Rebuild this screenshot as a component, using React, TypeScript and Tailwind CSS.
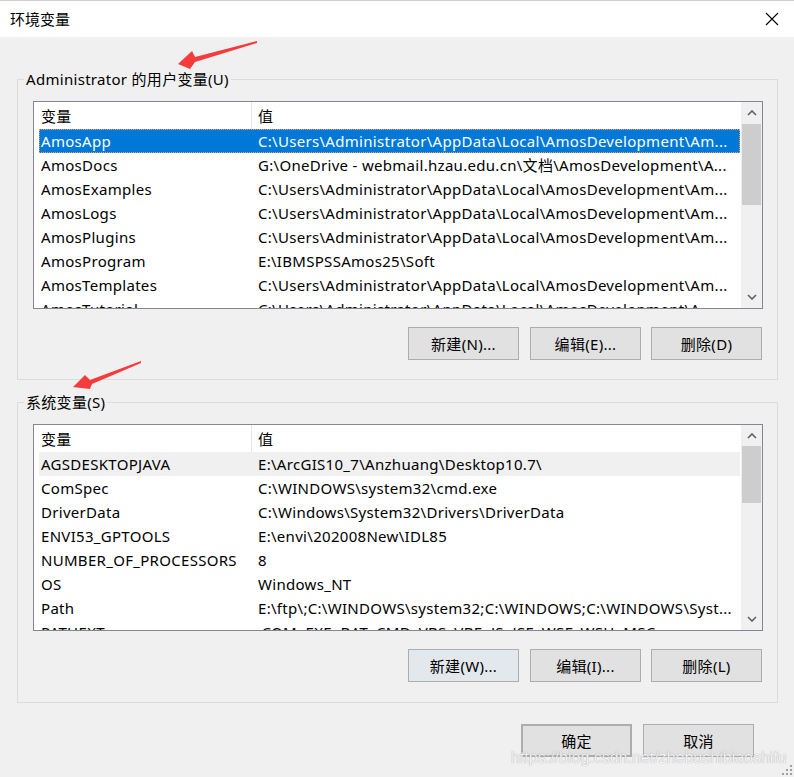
import React from "react";

type Row = { name: string; value: string };

const userRows: Row[] = [
  { name: "AmosApp", value: "C:\\Users\\Administrator\\AppData\\Local\\AmosDevelopment\\Am..." },
  { name: "AmosDocs", value: "G:\\OneDrive - webmail.hzau.edu.cn\\文档\\AmosDevelopment\\A..." },
  { name: "AmosExamples", value: "C:\\Users\\Administrator\\AppData\\Local\\AmosDevelopment\\Am..." },
  { name: "AmosLogs", value: "C:\\Users\\Administrator\\AppData\\Local\\AmosDevelopment\\Am..." },
  { name: "AmosPlugins", value: "C:\\Users\\Administrator\\AppData\\Local\\AmosDevelopment\\Am..." },
  { name: "AmosProgram", value: "E:\\IBMSPSSAmos25\\Soft" },
  { name: "AmosTemplates", value: "C:\\Users\\Administrator\\AppData\\Local\\AmosDevelopment\\Am..." },
  { name: "AmosTutorial", value: "C:\\Users\\Administrator\\AppData\\Local\\AmosDevelopment\\A..." },
];

const sysRows: Row[] = [
  { name: "AGSDESKTOPJAVA", value: "E:\\ArcGIS10_7\\Anzhuang\\Desktop10.7\\" },
  { name: "ComSpec", value: "C:\\WINDOWS\\system32\\cmd.exe" },
  { name: "DriverData", value: "C:\\Windows\\System32\\Drivers\\DriverData" },
  { name: "ENVI53_GPTOOLS", value: "E:\\envi\\202008New\\IDL85" },
  { name: "NUMBER_OF_PROCESSORS", value: "8" },
  { name: "OS", value: "Windows_NT" },
  { name: "Path", value: "E:\\ftp\\;C:\\WINDOWS\\system32;C:\\WINDOWS;C:\\WINDOWS\\Syst..." },
  { name: "PATHEXT", value: ".COM;.EXE;.BAT;.CMD;.VBS;.VBE;.JS;.JSE;.WSF;.WSH;.MSC" },
];

function Chevron({ up }: { up: boolean }) {
  return (
    <svg width="10" height="6" viewBox="0 0 10 6">
      <path
        d={up ? "M1 5 L5 1 L9 5" : "M1 1 L5 5 L9 1"}
        fill="none"
        stroke="#606060"
        strokeWidth="1.6"
      />
    </svg>
  );
}

function List({
  rows,
  selected,
  focused,
  thumbTop,
  thumbH,
  height,
}: {
  rows: Row[];
  selected: number;
  focused: boolean;
  thumbTop: string;
  thumbH: string;
  height: string;
}) {
  return (
    <div className={`flex w-[730px] ${height} border border-[#828790] bg-white`}>
      <div className="flex-1 overflow-hidden pl-[5px] pr-[1px]">
        <div className="flex h-[27px] items-center">
          <div className="flex h-full w-[213px] items-center border-r border-[#e5e5e5] pl-[2px]">变量</div>
          <div className="pl-[6px]">值</div>
        </div>
        {rows.map((r, i) => {
          const isSel = i === selected;
          const cls = isSel
            ? focused
              ? "bg-[#0078d7] text-white border border-dotted border-[#f6a05a]"
              : "bg-[#f0f0f0] border border-transparent"
            : "border border-transparent";
          return (
            <div key={r.name} className={`flex h-[24px] items-center whitespace-nowrap ${cls}`}>
              <div className="w-[213px] overflow-hidden pl-[1px]">{r.name}</div>
              <div className="flex-1 overflow-hidden pl-[5px]">{r.value}</div>
            </div>
          );
        })}
      </div>
      <div className="flex w-[21px] flex-col bg-[#f0f0f0]">
        <div className={`flex ${thumbTop} items-center justify-center`}>
          <Chevron up />
        </div>
        <div className={`${thumbH} mx-[1px] bg-[#cdcdcd]`} />
        <div className="flex-1" />
        <div className="flex h-[22px] items-center justify-center">
          <Chevron up={false} />
        </div>
      </div>
    </div>
  );
}

function Btn({ children, className = "" }: { children: React.ReactNode; className?: string }) {
  return (
    <div
      className={`flex h-[33px] w-[111px] items-center justify-center border border-[#adadad] bg-[#e1e1e1] ${className}`}
    >
      {children}
    </div>
  );
}

export default function App() {
  return (
    <div
      className="relative h-[777px] w-[794px] overflow-hidden bg-[#f0f0f0] text-[15px] leading-[20px] tracking-[0.3px] text-black"
      style={{ fontFamily: '"Noto Sans", "Noto Sans CJK SC", sans-serif' }}
    >
      {/* title bar */}
      <div className="flex h-[37px] items-center justify-between border-t border-[#d0d0d0] bg-white pl-[10px] pr-[15px]">
        <span className="tracking-normal">环境变量</span>
        <svg width="14" height="14" viewBox="0 0 14 14">
          <path d="M1 1 L13 13 M13 1 L1 13" stroke="#000" strokeWidth="1.1" />
        </svg>
      </div>

      <div className="pl-[17px] pt-[32px]">
        {/* user vars */}
        <fieldset className="w-[761px] border border-[#dcdcdc]">
          <legend className="ml-[6px] px-[2px] leading-[20px]">Administrator 的用户变量(U)</legend>
          <div className="pb-[19px] pl-[15px] pr-[14px]">
            <div className="mt-[12px]">
              <List rows={userRows} selected={0} focused thumbTop="h-[22px]" thumbH="h-[81px]" height="h-[208px]" />
            </div>
            <div className="mt-[18px] flex justify-end pr-[1px]">
              <Btn>新建(N)...</Btn>
              <Btn className="ml-[11px]">编辑(E)...</Btn>
              <Btn className="ml-[10px]">删除(D)</Btn>
            </div>
          </div>
        </fieldset>

        {/* system vars */}
        <fieldset className="mt-[12px] w-[761px] border border-[#dcdcdc]">
          <legend className="ml-[6px] px-[2px] leading-[20px]">系统变量(S)</legend>
          <div className="pb-[20px] pl-[15px] pr-[14px]">
            <div className="mt-[12px]">
              <List rows={sysRows} selected={0} focused={false} thumbTop="h-[21px]" thumbH="h-[57px]" height="h-[207px]" />
            </div>
            <div className="mt-[18px] flex justify-end pr-[1px]">
              <Btn className="border-[#8aa1b6] bg-[#e3e8ed]">新建(W)...</Btn>
              <Btn className="ml-[11px]">编辑(I)...</Btn>
              <Btn className="ml-[10px]">删除(L)</Btn>
            </div>
          </div>
        </fieldset>
      </div>

      <div className="mt-[21px] flex justify-end pr-[40px]">
        <Btn className="border-2 border-[#0078d7]">确定</Btn>
        <Btn className="ml-[11px]">取消</Btn>
      </div>

      {/* red annotation arrows */}
      <svg className="pointer-events-none absolute left-0 top-0" width="794" height="777" viewBox="0 0 794 777">
        <polygon points="257,41 195,57 192,51 178,64 190,69 195,62 257,43" fill="#f53b3b" />
        <polygon points="141,361 90,380 85,375 73,387 90,389 92,384 141,363" fill="#f53b3b" />
      </svg>

      {/* watermark */}
      <div
        className="pointer-events-none absolute left-[511px] top-[747px] whitespace-nowrap text-[16px] leading-[22px] tracking-normal text-white/90 [text-shadow:0_0_1px_rgba(0,0,0,0.45)]"
        style={{ fontFamily: '"Liberation Sans", sans-serif' }}
      >
        https://blog.csdn.net/zhebushibiaoshifu
      </div>

      {/* resize grip */}
      <svg className="pointer-events-none absolute bottom-[2px] right-[2px]" width="10" height="10" viewBox="0 0 10 10">
        <rect x="8" y="0" width="2" height="2" fill="#a0a0a0" />
        <rect x="4" y="4" width="2" height="2" fill="#a0a0a0" />
        <rect x="8" y="4" width="2" height="2" fill="#a0a0a0" />
        <rect x="0" y="8" width="2" height="2" fill="#a0a0a0" />
        <rect x="4" y="8" width="2" height="2" fill="#a0a0a0" />
        <rect x="8" y="8" width="2" height="2" fill="#a0a0a0" />
      </svg>
    </div>
  );
}
